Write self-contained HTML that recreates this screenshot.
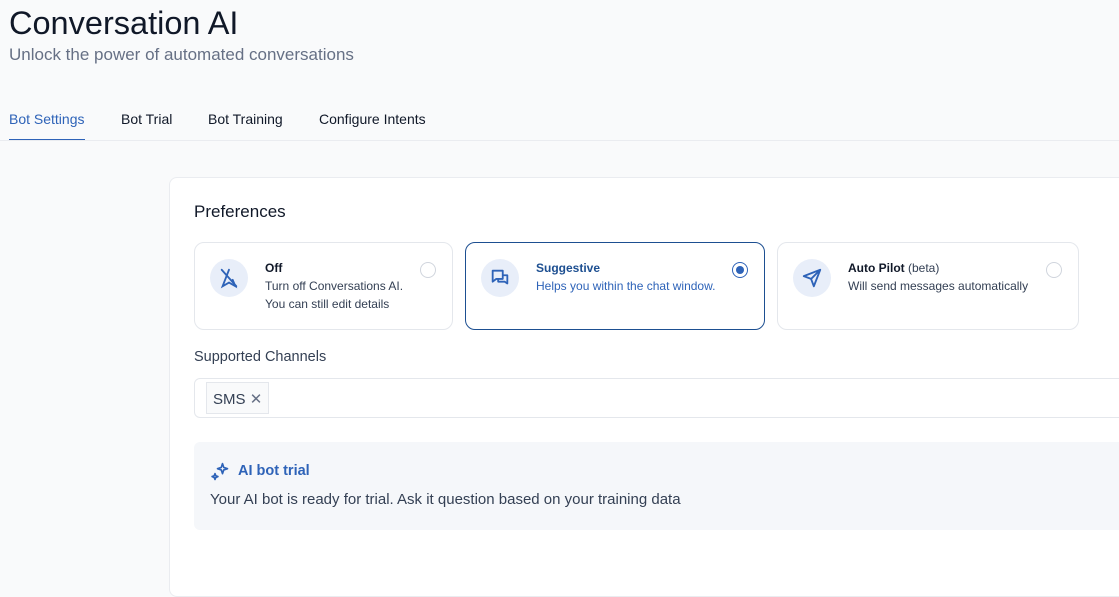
<!DOCTYPE html>
<html><head><style>
*{margin:0;padding:0;box-sizing:border-box}
body{width:1119px;height:568px;overflow:hidden;background:#f9fafb;font-family:"Liberation Sans",sans-serif;color:#101828;position:relative}
.abs{position:absolute}
h1{position:absolute;left:9px;top:5px;font-size:32.5px;font-weight:400;color:#101828}
.sub{left:9px;top:45px;font-size:17px;color:#667085}
.tab{top:111px;font-size:14px;color:#101828}
.line{left:0;top:140px;width:1119px;height:1px;background:#eaecf0}
.card{left:169px;top:177px;width:960px;height:420px;background:#fff;border:1px solid #eaecf0;border-radius:8px}
.opt{top:242px;width:259px;height:88px;background:#fff;border:1px solid #e4e7ec;border-radius:10px}
.ic{position:absolute;left:15px;top:16px;width:38px;height:38px;border-radius:50%;background:#e8eef9;display:flex;align-items:center;justify-content:center}
.t{position:absolute;left:70px;top:16px;font-size:12px;line-height:18px;color:#344054}
.t b{color:#101828}
.radio{position:absolute;right:16px;top:19px;width:16px;height:16px;border-radius:50%;border:1px solid #d0d5dd}
</style></head><body>
<h1>Conversation AI</h1>
<div class="abs sub">Unlock the power of automated conversations</div>
<div class="abs tab" style="left:9px;color:#2e63b8">Bot Settings</div>
<div class="abs" style="left:9px;top:139px;width:76px;height:2px;background:#2e63b8"></div>
<div class="abs tab" style="left:121px">Bot Trial</div>
<div class="abs tab" style="left:208px">Bot Training</div>
<div class="abs tab" style="left:319px">Configure Intents</div>
<div class="abs line"></div>
<div class="abs card"></div>
<div class="abs" style="left:194px;top:202px;font-size:17px;color:#101828">Preferences</div>

<div class="abs opt" style="left:194px">
 <div class="ic"><svg width="22" height="22" viewBox="0 0 24 24" fill="none" stroke="#2e63b8" stroke-width="2" stroke-linecap="round"><path d="M4 3l16 18M12 3l-7 18 7-4 7 4-3-7"/></svg></div>
 <div class="t"><b>Off</b><br>Turn off Conversations AI.<br>You can still edit details</div>
 <div class="radio"></div>
</div>
<div class="abs opt" style="left:465px;width:300px;border-color:#1d4f91">
 <div class="ic"><svg width="22" height="22" viewBox="0 0 24 24" fill="none" stroke="#2e63b8" stroke-width="2" stroke-linejoin="round"><path d="M4 4h11v9H8l-4 3z"/><path d="M15 9h5v9l-3-2h-7v-3"/></svg></div>
 <div class="t" style="color:#2e63b8"><b style="color:#1d4f91">Suggestive</b><br>Helps you within the chat window.</div>
 <div class="radio" style="border-color:#2e63b8;display:flex;align-items:center;justify-content:center"><div style="width:8px;height:8px;border-radius:50%;background:#2e63b8"></div></div>
</div>
<div class="abs opt" style="left:777px;width:302px">
 <div class="ic"><svg width="22" height="22" viewBox="0 0 24 24" fill="none" stroke="#2e63b8" stroke-width="2" stroke-linejoin="round"><path d="M21 3L3 10l8 3 3 8z M11 13l10-10"/></svg></div>
 <div class="t"><b>Auto Pilot</b> (beta)<br>Will send messages automatically</div>
 <div class="radio"></div>
</div>

<div class="abs" style="left:194px;top:349px;font-size:14.5px;color:#344054">Supported Channels</div>
<div class="abs" style="left:194px;top:378px;width:940px;height:40px;border:1px solid #e4e7ec;border-radius:6px;background:#fff"></div>
<div class="abs" style="left:206px;top:382px;width:63px;height:32px;border:1px solid #e4e7ec;background:#f9fafb;font-size:15px;color:#344054;padding:7px 0 0 6px">SMS <span style="color:#667085">✕</span></div>

<div class="abs" style="left:194px;top:442px;width:940px;height:88px;background:#f5f7fa;border-radius:6px"></div>
<svg class="abs" style="left:209px;top:462px" width="22" height="20" viewBox="0 0 24 24" fill="none" stroke="#2e63b8" stroke-width="2" stroke-linejoin="round"><path d="M15 2l1.5 4.5L21 8l-4.5 1.5L15 14l-1.5-4.5L9 8l4.5-1.5z"/><path d="M6 14l1 2.5 2.5 1-2.5 1L6 21l-1-2.5-2.5-1 2.5-1z"/></svg>
<div class="abs" style="left:238px;top:463px;font-size:14.5px;font-weight:bold;color:#2e63b8">AI bot trial</div>
<div class="abs" style="left:210px;top:491px;font-size:15px;color:#344054">Your AI bot is ready for trial. Ask it question based on your training data</div>
</body></html>
